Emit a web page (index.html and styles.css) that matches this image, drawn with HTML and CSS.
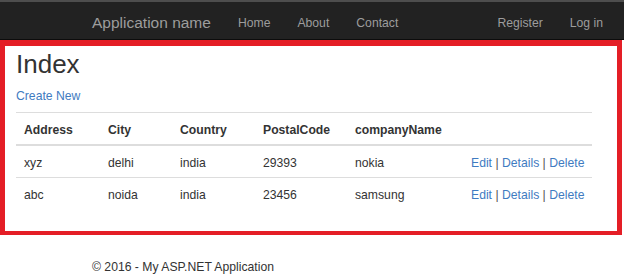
FILE: index.html
```html
<!DOCTYPE html>
<html lang="en">
<head>
  <meta charset="UTF-8" />
  <meta name="viewport" content="width=device-width, initial-scale=1.0"/>
  <title>Index - My ASP.NET Application</title>
  <link rel="stylesheet" href="styles.css">
</head>
<body>

  <!-- Top navigation -->
  <nav class="navbar">
    <a class="brand" href="#">Application name</a>
    <ul class="nav-links">
      <li><a href="#">Home</a></li>
      <li><a href="#">About</a></li>
      <li><a href="#">Contact</a></li>
    </ul>
    <ul class="nav-links nav-right">
      <li><a href="#">Register</a></li>
      <li><a href="#">Log in</a></li>
    </ul>
  </nav>

  <!-- Body content (highlighted) -->
  <main class="body-box">
    <h2>Index</h2>
    <p><a href="#">Create New</a></p>

    <table class="grid">
      <colgroup>
        <col class="c-address">
        <col class="c-city">
        <col class="c-country">
        <col class="c-postal">
        <col class="c-company">
        <col class="c-actions">
      </colgroup>
      <thead>
        <tr>
          <th>Address</th>
          <th>City</th>
          <th>Country</th>
          <th>PostalCode</th>
          <th>companyName</th>
          <th></th>
        </tr>
      </thead>
      <tbody>
        <tr>
          <td>xyz</td>
          <td>delhi</td>
          <td>india</td>
          <td>29393</td>
          <td>nokia</td>
          <td class="actions"><a href="#">Edit</a> | <a href="#">Details</a> | <a href="#">Delete</a></td>
        </tr>
        <tr>
          <td>abc</td>
          <td>noida</td>
          <td>india</td>
          <td>23456</td>
          <td>samsung</td>
          <td class="actions"><a href="#">Edit</a> | <a href="#">Details</a> | <a href="#">Delete</a></td>
        </tr>
      </tbody>
    </table>
  </main>

  <footer class="footer">
    <p>&copy; 2016 - My ASP.NET Application</p>
  </footer>

</body>
</html>
```

FILE: styles.css
```css
body { margin: 0; font-family: "Liberation Sans", Arial, sans-serif; font-size: 12.2px; line-height: 17px; color: #333; background: #fff; }
a { color: #3f7bc1; text-decoration: none; }

.navbar { display: flex; align-items: flex-start; height: 37px; padding: 0 21px 0 92px; background: #222; border-top: 2px solid #4e4e4e; border-bottom: 1px solid #0c0c0c; }
.navbar a { color: #9d9d9d; }
.brand { padding-top: 11px; font-size: 15.5px; line-height: 20px; }
.nav-links { display: flex; gap: 27px; list-style: none; margin: 0 0 0 27px; padding: 11px 0 0; line-height: 20px; }
.nav-right { margin-left: auto; }

.body-box { margin: 0 2px 0 0; border-style: solid; border-color: #e41e26; border-width: 6px 5px 4px 5px; padding: 4px 11px 22px; }
.body-box h2 { margin: 0; font-size: 26px; font-weight: normal; line-height: 28px; color: #333; }
.body-box p { margin: 10px 0 7px; }

.grid { width: 576px; table-layout: fixed; border-collapse: collapse; border-top: 1px solid #ddd; }
.grid th, .grid td { padding: 9px 8px 5px; text-align: left; white-space: nowrap; }
.grid th { font-weight: bold; border-bottom: 2px solid #ddd; }
.grid tbody tr + tr td { border-top: 1px solid #ddd; }
.grid .actions { color: #555; }
.c-address { width: 84px; }
.c-city { width: 72px; }
.c-country { width: 83px; }
.c-postal { width: 92px; }
.c-company { width: 116px; }
.c-actions { width: 129px; }

.footer { padding-left: 92px; }
.footer p { margin: 24px 0 0; }
```
